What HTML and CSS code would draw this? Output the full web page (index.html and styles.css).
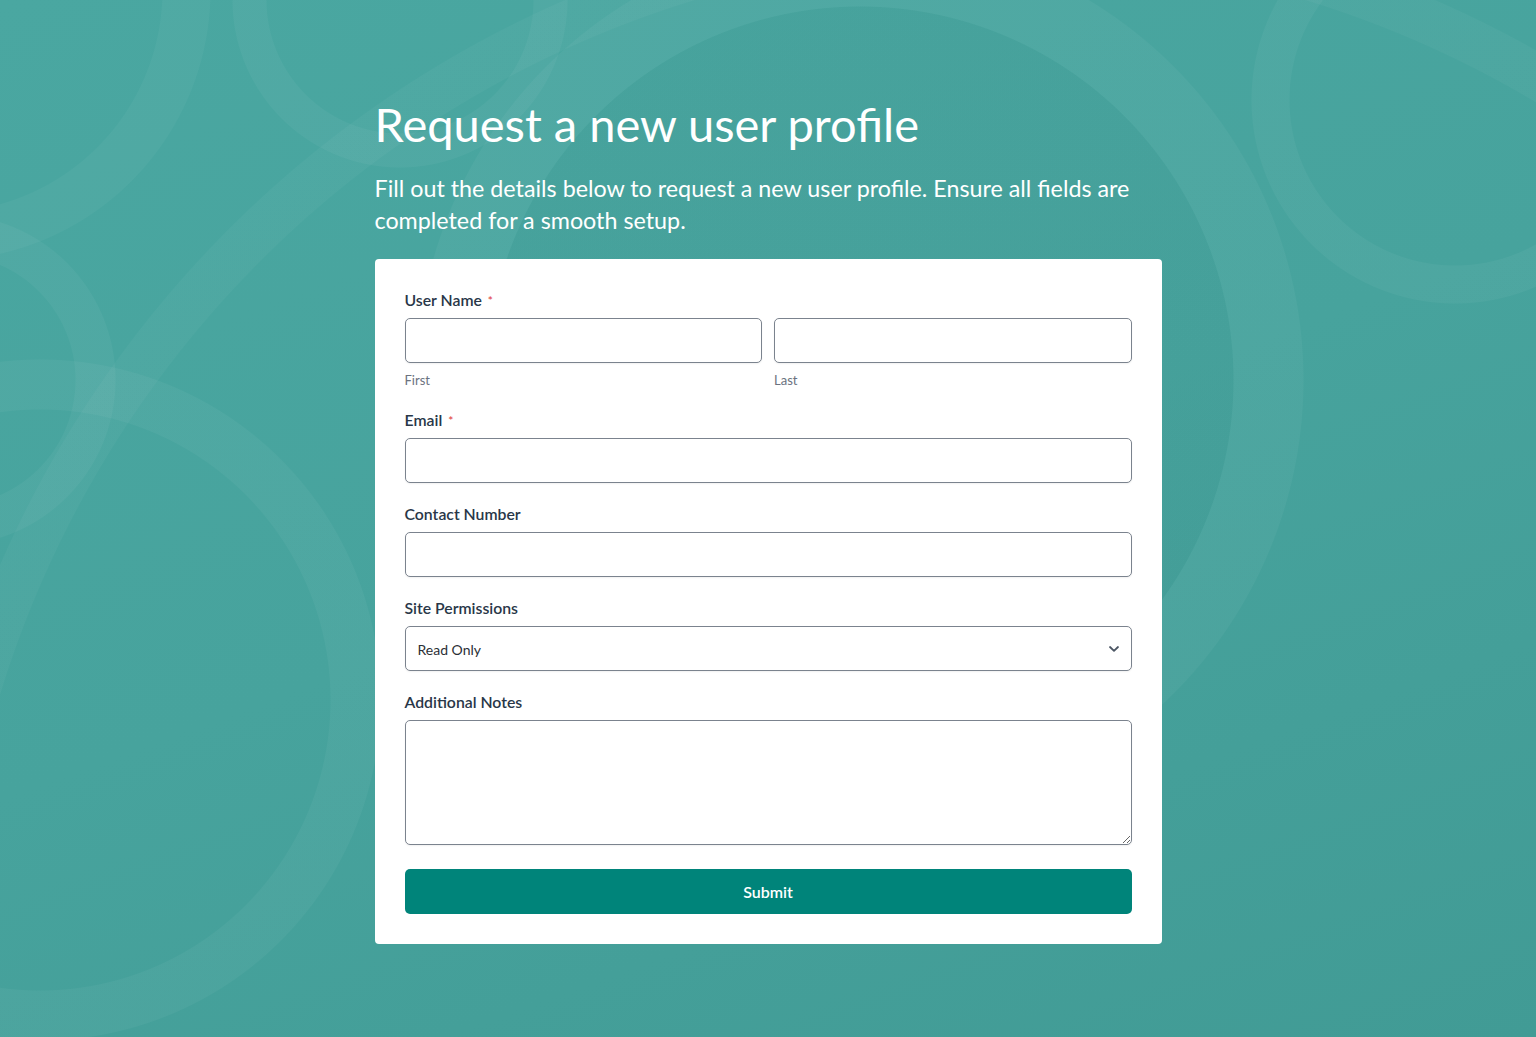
FILE: index.html
```html
<!DOCTYPE html>
<html lang="en">
<head>
<meta charset="utf-8">
<title>Request a new user profile</title>
<link rel="stylesheet" href="styles.css">
</head>
<body>
<main class="page">
  <h1 class="title">Request a new user profile</h1>
  <p class="intro">Fill out the details below to request a new user profile. Ensure all fields are completed for a smooth setup.</p>
  <form class="card">
    <div class="field">
      <div class="label">User Name <span class="req">*</span></div>
      <div class="name-row">
        <div class="name-col">
          <input class="input" type="text">
          <div class="sublabel">First</div>
        </div>
        <div class="name-col">
          <input class="input" type="text">
          <div class="sublabel">Last</div>
        </div>
      </div>
    </div>
    <div class="field">
      <div class="label">Email <span class="req">*</span></div>
      <input class="input" type="email">
    </div>
    <div class="field">
      <div class="label">Contact Number</div>
      <input class="input" type="tel">
    </div>
    <div class="field">
      <div class="label">Site Permissions</div>
      <div class="select-wrap">
        <select class="select">
          <option>Read Only</option>
          <option>Edit</option>
          <option>Admin</option>
        </select>
        <svg class="chevron" width="12" height="8" viewBox="0 0 12 8"><path d="M2 2 L6 5.8 L10 2" fill="none" stroke="#4b5563" stroke-width="1.8" stroke-linecap="round" stroke-linejoin="round"/></svg>
      </div>
    </div>
    <div class="field">
      <div class="label">Additional Notes</div>
      <textarea class="textarea"></textarea>
    </div>
    <button class="submit" type="button">Submit</button>
  </form>
</main>
</body>
</html>
```

FILE: styles.css
```css
html, body {
  margin: 0;
  padding: 0;
}
body {
  min-height: 1037px;
  font-family: Lato, "Noto Sans", sans-serif;
  background-color: #47a39d;
  background-image:
    radial-gradient(circle at 1455px 100px, transparent 165px, rgba(255,255,255,0.04) 166px, rgba(255,255,255,0.04) 203px, transparent 204px),
    radial-gradient(circle at 400px 0px, transparent 133px, rgba(255,255,255,0.04) 134px, rgba(255,255,255,0.04) 167px, transparent 168px),
    radial-gradient(circle at -60px -10px, transparent 222px, rgba(255,255,255,0.035) 223px, rgba(255,255,255,0.035) 270px, transparent 271px),
    radial-gradient(circle at -50px 380px, transparent 125px, rgba(255,255,255,0.04) 126px, rgba(255,255,255,0.04) 165px, transparent 166px),
    radial-gradient(circle at 40px 700px, transparent 290px, rgba(255,255,255,0.04) 291px, rgba(255,255,255,0.04) 340px, transparent 341px),
    radial-gradient(circle at 860px 380px, transparent 373px, rgba(255,255,255,0.04) 374px, rgba(255,255,255,0.04) 443px, transparent 444px),
    radial-gradient(circle at 1000px 1000px, transparent 1045px, rgba(255,255,255,0.03) 1046px, rgba(255,255,255,0.03) 1090px, transparent 1091px),
    radial-gradient(circle at 860px 380px, rgba(0,40,40,0.025) 0, rgba(0,40,40,0.025) 373px, transparent 374px),
    linear-gradient(160deg, #4aa7a1 0%, #47a39d 50%, #419b95 100%);
  background-repeat: no-repeat;
}
.page {
  width: 787px;
  margin: 0 auto;
  padding: 96px 0 93px;
  box-sizing: border-box;
}
.title {
  margin: 0;
  color: #ffffff;
  font-weight: 400;
  font-size: 47px;
  line-height: 56px;
}
.intro {
  margin: 20px 0 23px;
  color: #ffffff;
  font-size: 23.3px;
  line-height: 32px;
}
.card {
  background: #ffffff;
  border-radius: 4px;
  padding: 30px 30px 30px;
  display: flex;
  flex-direction: column;
  gap: 20px;
}
.field {
  display: flex;
  flex-direction: column;
}
.label {
  color: #293748;
  font-size: 15.8px;
  font-weight: 600;
  line-height: 22px;
  height: 22px;
  margin-bottom: 7px;
}
.req {
  color: #e24c4c;
  font-size: 12px;
  line-height: 0;
  margin-left: 2px;
  vertical-align: 1px;
}
.name-row {
  display: flex;
  gap: 12px;
}
.name-col {
  flex: 1;
  display: flex;
  flex-direction: column;
}
.sublabel {
  margin-top: 9px;
  color: #6b7280;
  font-size: 13px;
  line-height: 17px;
}
.input, .select, .textarea {
  box-sizing: border-box;
  width: 100%;
  height: 45px;
  border: 1px solid #7b838e;
  border-radius: 5px;
  background: #ffffff;
  box-shadow: 0 1px 2px rgba(0,0,0,0.06);
  font-family: Lato, "Noto Sans", sans-serif;
  font-size: 14px;
  color: #2b2f36;
  padding: 0 12px;
  margin: 0;
  outline: none;
  display: block;
}
.select-wrap {
  position: relative;
}
.select {
  appearance: none;
  -webkit-appearance: none;
  padding-top: 2px;
}
.chevron {
  position: absolute;
  right: 12px;
  top: 19px;
  pointer-events: none;
}
.textarea {
  height: 125px;
  padding: 10px 12px;
  resize: vertical;
}
.submit {
  margin-top: 4px;
  height: 45px;
  border: none;
  border-radius: 5px;
  background: #00847a;
  color: #ffffff;
  font-family: Lato, "Noto Sans", sans-serif;
  font-size: 16px;
  font-weight: 600;
  cursor: pointer;
}
```
